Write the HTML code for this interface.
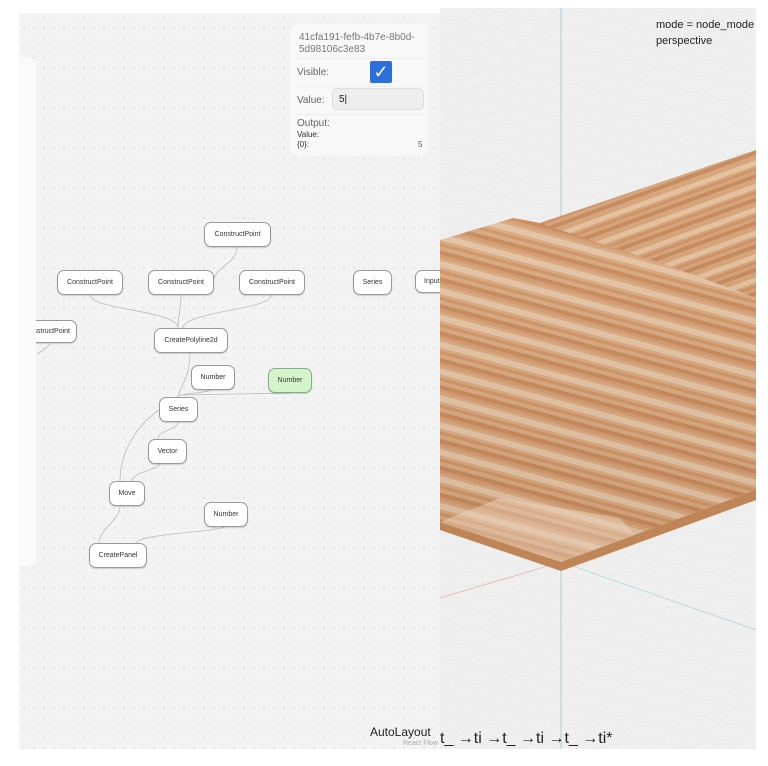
<!DOCTYPE html>
<html><head><meta charset="utf-8"><style>
body{margin:0;width:768px;height:766px;background:#fff;position:relative;overflow:hidden;font-family:"Liberation Sans",sans-serif}
#left{position:absolute;left:19px;top:13px;width:421px;height:736px;background-color:#f3f3f3;background-image:radial-gradient(#d6d6d6 0.7px,transparent 0.9px);background-size:10px 10px}
#right{position:absolute;left:440px;top:8px;width:316px;height:741px;background:#efefef;overflow:hidden}
.info{position:absolute;left:290px;top:24px;width:138px;height:131px;background:#f8f8f8;border-radius:8px;font-size:10px;color:#666}
.n{position:absolute;height:23px;background:#fff;border:1px solid #999;border-radius:7px;font-size:7px;color:#333;display:flex;align-items:center;justify-content:center;box-shadow:0 1px 1px rgba(0,0,0,.15)}
</style></head><body>
<div id="left"></div>
<svg style="position:absolute;left:0;top:0" width="440" height="766" fill="none" stroke="#bbb" stroke-width="0.8">
<path d="M237 246 C237 265 215 265 213 283"/>
<path d="M90 295 C90 310 178 310 178 328"/>
<path d="M181 295 C181 310 178 315 178 328"/>
<path d="M271 295 C271 310 190 310 182 328"/>
<path d="M190 352 C190 380 180 385 178 397"/>
<path d="M212 389 C212 393 178 393 178 397"/>
<path d="M290 393 L182 395"/>
<path d="M178 422 C178 430 158 430 158 439"/>
<path d="M159 410 C130 430 120 460 120 481"/>
<path d="M160 463 C160 470 132 472 132 481"/>
<path d="M120 506 C120 520 99 530 99 543"/>
<path d="M225 526 C225 532 140 533 136 543"/>
<path d="M50 344 C45 350 40 352 37 354"/>
</svg>
<div class="info">
<div style="position:absolute;left:9px;top:8px;line-height:12px;color:#777">41cfa191-fefb-4b7e-8b0d-<br>5d98106c3e83</div>
<div style="position:absolute;left:6px;top:34px;width:130px;border-top:1px solid #eee"></div>
<div style="position:absolute;left:7px;top:43px">Visible:</div>
<div style="position:absolute;left:80px;top:37px;width:22px;height:22px;background:#2a6fdb;border-radius:2px;color:#fff;font-size:18px;text-align:center;line-height:22px">✓</div>
<div style="position:absolute;left:6px;top:62px;width:130px;border-top:1px solid #eee"></div>
<div style="position:absolute;left:7px;top:71px">Value:</div>
<div style="position:absolute;left:42px;top:64px;width:92px;height:22px;background:#eee;border:1px solid #ddd;border-radius:5px;color:#222;line-height:22px;padding-left:6px;box-sizing:border-box">5|</div>
<div style="position:absolute;left:6px;top:90px;width:130px;border-top:1px solid #eee"></div>
<div style="position:absolute;left:7px;top:94px">Output:</div>
<div style="position:absolute;left:7px;top:106px;font-size:8px;color:#333">Value:</div>
<div style="position:absolute;left:7px;top:116px;font-size:8px;color:#333">{0}:</div>
<div style="position:absolute;left:128px;top:116px;font-size:8px;color:#555">5</div>
</div>
<div class="n" style="left:204px;top:222px;width:65px">ConstructPoint</div>
<div class="n" style="left:57px;top:270px;width:64px">ConstructPoint</div>
<div class="n" style="left:148px;top:270px;width:64px">ConstructPoint</div>
<div class="n" style="left:239px;top:270px;width:64px">ConstructPoint</div>
<div class="n" style="left:353px;top:270px;width:37px">Series</div>
<div class="n" style="left:415px;top:270px;width:37px;justify-content:flex-start;padding-left:8px;box-sizing:border-box">Input</div>
<div class="n" style="left:10px;top:320px;width:67px;justify-content:flex-end;padding-right:6px;box-sizing:border-box">ConstructPoint</div>
<div style="position:absolute;left:0;top:13px;width:19px;height:736px;background:#fff"></div>
<div style="position:absolute;left:19px;top:57px;width:17px;height:509px;background:#fafafa;border-radius:0 8px 8px 0"></div>
<div class="n" style="left:154px;top:328px;width:72px">CreatePolyline2d</div>
<div class="n" style="left:191px;top:365px;width:42px">Number</div>
<div class="n" style="left:268px;top:368px;width:42px;background:#d4f5cc;border-color:#8a8">Number</div>
<div class="n" style="left:159px;top:397px;width:37px">Series</div>
<div class="n" style="left:148px;top:439px;width:37px">Vector</div>
<div class="n" style="left:109px;top:481px;width:34px">Move</div>
<div class="n" style="left:204px;top:502px;width:42px">Number</div>
<div class="n" style="left:89px;top:543px;width:56px">CreatePanel</div>
<div style="position:absolute;left:370px;top:725px;font-size:12px;color:#222">AutoLayout</div>
<div style="position:absolute;left:403px;top:740px;font-size:7px;color:#aaa">React Flow</div>
<div id="right">
<svg width="316" height="741" style="position:absolute;left:0;top:0">
<defs>
<pattern id="g" width="24" height="14" patternUnits="userSpaceOnUse" patternTransform="rotate(-10) skewX(-55)"><path d="M0 0H24M0 0V14" stroke="#e0e0e0" stroke-width="0.6" fill="none"/></pattern>
<pattern id="w" width="60" height="26" patternUnits="userSpaceOnUse" patternTransform="rotate(15)">
<rect width="60" height="26" fill="#d9a981"/><rect y="0" width="60" height="4" fill="#c98a5c"/><rect y="4" width="60" height="3" fill="#d59b6f"/><rect y="10" width="60" height="6" fill="#e6c4a4"/><rect y="19" width="60" height="3" fill="#d19563"/></pattern>
<pattern id="w2" width="60" height="22" patternUnits="userSpaceOnUse" patternTransform="rotate(-20)">
<rect width="60" height="22" fill="#d6a277"/><rect y="0" width="60" height="4" fill="#c6875a"/><rect y="9" width="60" height="5" fill="#e4c09c"/><rect y="16" width="60" height="3" fill="#cf9063"/></pattern>
<linearGradient id="sh" x1="0" y1="0" x2="0" y2="1"><stop offset="0" stop-color="#fff" stop-opacity=".05"/><stop offset="1" stop-color="#000" stop-opacity=".06"/></linearGradient>
</defs>
<rect width="316" height="741" fill="url(#g)"/>
<line x1="121" y1="0" x2="121" y2="741" stroke="#9cc3dc" stroke-width="0.8"/>
<line x1="121" y1="554" x2="316" y2="622" stroke="#9dd0c8" stroke-width="0.6"/>
<line x1="121" y1="554" x2="0" y2="590" stroke="#e4a0a0" stroke-width="0.6"/>
<polygon points="0,232 73,210 100,215 316,142 316,482 121,554 0,514" fill="url(#w)"/>
<polygon points="100,215 316,142 316,290 230,258 150,232" fill="url(#w2)"/>
<polygon points="0,232 73,210 100,215 316,142 316,482 121,554 0,514" fill="url(#sh)"/>
<polygon points="0,514 121,554 316,482 316,492 121,563 0,522" fill="#c08557"/>
<polygon points="0,514 121,554 195,527 180,510 60,490" fill="#f0d8c0" opacity=".45"/>
</svg>
<div style="position:absolute;left:216px;top:9px;font-size:11px;color:#222;line-height:16px;white-space:nowrap">mode = node_mode<br>perspective</div>
<div style="position:absolute;left:0;top:722px;font-size:16px;color:#222;white-space:nowrap">t_ →ti →t_ →ti →t_ →ti*</div>
</div>
</body></html>
